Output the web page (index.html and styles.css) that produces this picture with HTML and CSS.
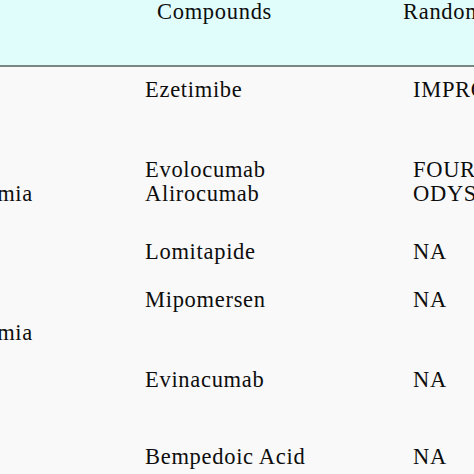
FILE: index.html
```html
<!DOCTYPE html>
<html lang="en">
<head>
<meta charset="utf-8">
<title>Lipid-lowering compounds</title>
<link rel="stylesheet" href="styles.css">
</head>
<body>
<div class="table">
  <div class="thead">
    <div class="th th-cat"></div>
    <div class="th">Compounds</div>
    <div class="th">Randomized controlled trials</div>
  </div>
  <div class="tbody">
    <div class="cell cat cat-1"><span class="cat-text">Primary<br>hypercholesterolemia</span></div>
    <div class="cell cmp r1">Ezetimibe</div>
    <div class="cell trial r1">IMPROVE-IT</div>

    <div class="cell cmp r2">Evolocumab<br>Alirocumab</div>
    <div class="cell trial r2">FOURIER<br>ODYSSEY OUTCOMES</div>

    <div class="cell cmp r3">Lomitapide</div>
    <div class="cell trial r3">NA</div>

    <div class="cell cat cat-2"><span class="cat-text">Homozygous<br>familial hypercholesterolemia</span></div>
    <div class="cell cmp r4">Mipomersen</div>
    <div class="cell trial r4">NA</div>

    <div class="cell cmp r5">Evinacumab</div>
    <div class="cell trial r5">NA</div>

    <div class="cell cmp r6">Bempedoic Acid</div>
    <div class="cell trial r6">NA</div>
  </div>
</div>
</body>
</html>
```

FILE: styles.css
```css
html, body {
  margin: 0;
  padding: 0;
  overflow: hidden;
  background: #f9f9f9;
}

.table {
  width: 474px;
  height: 474px;
  overflow: hidden;
  font-family: "Liberation Serif", "Times New Roman", serif;
  font-size: 22.5px;
  line-height: 24px;
  letter-spacing: 0.7px;
  color: #0d0d0d;
}

.thead {
  display: grid;
  grid-template-columns: 157px 246px 1fr;
  height: 65px;
  background: #e0fdfc;
  border-bottom: 2px solid #7b8782;
  white-space: nowrap;
}

.tbody {
  display: grid;
  grid-template-columns: 145px 268px 1fr;
  grid-template-rows: 80px 82px 48px 80px 77px auto;
  padding-top: 11px;
  white-space: nowrap;
}

.cell {
  align-self: start;
}

.cmp { grid-column: 2; }
.trial { grid-column: 3; }

.r1 { grid-row: 1; }
.r2 { grid-row: 2; }
.r3 { grid-row: 3; }
.r4 { grid-row: 4; }
.r5 { grid-row: 5; }
.r6 { grid-row: 6; }

.cat {
  grid-column: 1;
  display: flex;
  justify-content: flex-end;
  padding-right: 112px;
  min-width: 0;
}

.cat-1 { grid-row: 2; }
.cat-2 { grid-row: 4; margin-top: 9px; }

.cat-text {
  display: block;
  flex: none;
  text-align: left;
}
```
